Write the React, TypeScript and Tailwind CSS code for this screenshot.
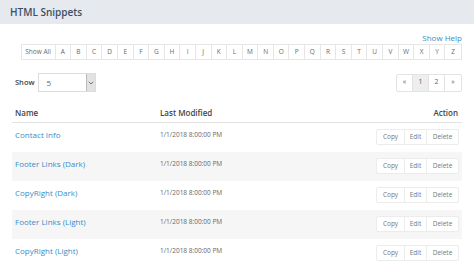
import React from 'react';

const letters = 'ABCDEFGHIJKLMNOPQRSTUVWXYZ'.split('');

const snippets = [
  { name: 'Contact Info', modified: '1/1/2018 8:00:00 PM' },
  { name: 'Footer Links (Dark)', modified: '1/1/2018 8:00:00 PM' },
  { name: 'CopyRight (Dark)', modified: '1/1/2018 8:00:00 PM' },
  { name: 'Footer Links (Light)', modified: '1/1/2018 8:00:00 PM' },
  { name: 'CopyRight (Light)', modified: '1/1/2018 8:00:00 PM' },
];

const App: React.FC = () => {
  return (
    <div className="w-[474px] h-[267px] overflow-hidden bg-white font-['Open_Sans',sans-serif]">
      <div className="h-[24px] bg-[#e6e9ed] px-[10px] flex items-center">
        <h1 className="text-[10px] font-semibold text-[#3c4f66]">HTML Snippets</h1>
      </div>

      <div className="flex justify-end pr-[12px] pt-[9px] h-[20px]">
        <a className="text-[8px] leading-[10px] text-[#3a8cc6]">Show Help</a>
      </div>

      <div className="flex justify-end pr-[12px]">
        <div className="flex h-[16px] border border-[#e6e6e6] text-[6.5px] text-[#6a6a6a]">
          <div className="w-[34px] flex items-center justify-center border-r border-[#e6e6e6]">Show All</div>
          {letters.map((l, i) => (
            <div
              key={l}
              className={`w-[15.6px] flex items-center justify-center ${i < letters.length - 1 ? 'border-r border-[#e6e6e6]' : ''}`}
            >
              {l}
            </div>
          ))}
        </div>
      </div>

      <div className="flex items-center justify-between pl-[15px] pr-[12px] mt-[13px]">
        <div className="flex items-center">
          <span className="text-[7.5px] font-semibold text-[#444] mr-[3px]">Show</span>
          <div className="flex w-[58px] h-[19px] border border-[#dcdcdc]">
            <span className="flex-1 text-[8px] text-[#666] pl-[8px] flex items-center">5</span>
            <span className="w-[9px] bg-[#e2e2e2] border-l border-[#bbb] flex items-center justify-center">
              <svg width="6" height="4" viewBox="0 0 6 4">
                <path d="M0.8 0.8 L3 3 L5.2 0.8" fill="none" stroke="#666" strokeWidth="0.9" />
              </svg>
            </span>
          </div>
        </div>
        <div className="flex h-[18px] border border-[#e3e3e3] rounded-[2px] text-[7px] text-[#666]">
          <div className="w-[16px] flex items-center justify-center border-r border-[#e3e3e3]">«</div>
          <div className="w-[16px] flex items-center justify-center border-r border-[#e3e3e3] bg-[#eeeeee] text-[#555]">1</div>
          <div className="w-[16px] flex items-center justify-center border-r border-[#e3e3e3]">2</div>
          <div className="w-[16px] flex items-center justify-center">»</div>
        </div>
      </div>

      <div className="mx-[12px] mt-[12px]">
        <div className="flex items-center h-[19px] border-b border-[#e2e2e2] text-[8px] font-semibold text-[#444]">
          <div className="w-[148px] pl-[3px]">Name</div>
          <div className="flex-1">Last Modified</div>
          <div className="pr-[4px]">Action</div>
        </div>
        {snippets.map((s, i) => (
          <div
            key={s.name}
            className={`flex h-[29px] pt-[5px] ${i % 2 === 1 ? 'bg-[#f6f6f6]' : 'bg-white'}`}
          >
            <div className="w-[148px] pl-[3px] pt-[1px] text-[8px] leading-[11px] text-[#3a8cc6]">{s.name}</div>
            <div className="flex-1 pt-[2px] text-[6.5px] leading-[9px] text-[#666]">{s.modified}</div>
            <div className="pr-[3px] pt-[1px]">
              <div className="flex h-[16px] border border-[#ececec] bg-white rounded-[2px] text-[6.5px] text-[#777]">
                <div className="w-[28px] flex items-center justify-center border-r border-[#ececec]">Copy</div>
                <div className="w-[22px] flex items-center justify-center border-r border-[#ececec]">Edit</div>
                <div className="w-[31px] flex items-center justify-center">Delete</div>
              </div>
            </div>
          </div>
        ))}
      </div>
    </div>
  );
};

export default App;
